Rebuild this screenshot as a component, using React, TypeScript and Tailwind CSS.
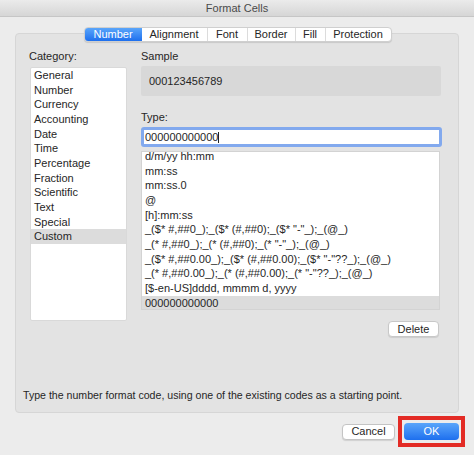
import React from "react";

const categories = [
  "General",
  "Number",
  "Currency",
  "Accounting",
  "Date",
  "Time",
  "Percentage",
  "Fraction",
  "Scientific",
  "Text",
  "Special",
  "Custom",
];

const formats = [
  "d/m/yy hh:mm",
  "mm:ss",
  "mm:ss.0",
  "@",
  "[h]:mm:ss",
  '_($* #,##0_);_($* (#,##0);_($* "-"_);_(@_)',
  '_(* #,##0_);_(* (#,##0);_(* "-"_);_(@_)',
  '_($* #,##0.00_);_($* (#,##0.00);_($* "-"??_);_(@_)',
  '_(* #,##0.00_);_(* (#,##0.00);_(* "-"??_);_(@_)',
  "[$-en-US]dddd, mmmm d, yyyy",
  "000000000000",
];

const tabs: { label: string; w: string; active?: boolean }[] = [
  { label: "Number", w: "w-[57px]", active: true },
  { label: "Alignment", w: "w-[65px]" },
  { label: "Font", w: "w-[40px]" },
  { label: "Border", w: "w-[48px]" },
  { label: "Fill", w: "w-[30px]" },
  { label: "Protection", w: "w-[66px]" },
];

export default function App() {
  return (
    <div
      className="w-[474px] h-[455px] bg-[#ececec] flex flex-col text-[#262626] text-[11px] overflow-hidden"
      style={{ fontFamily: '"Liberation Sans", Arial, sans-serif' }}
    >
      {/* Title bar */}
      <div className="h-[17px] shrink-0 flex items-center justify-center bg-gradient-to-b from-[#ebebeb] to-[#d6d6d6] border-b border-[#c6c6c6] text-[#4a4a4a] text-[11px]">
        Format Cells
      </div>

      {/* Tabs */}
      <div className="mt-[10px] flex justify-center relative z-10 pl-[1px]">
        <div className="flex h-[15px] rounded-[4px] bg-white border border-[#cfcfcf] shadow-[0_1px_1px_rgba(0,0,0,0.12)] overflow-hidden">
          {tabs.map((t, i) => (
            <div
              key={t.label}
              className={
                t.active
                  ? `${t.w} flex items-center justify-center bg-gradient-to-b from-[#5aa5fa] to-[#1d6fee] text-white`
                  : `${t.w} flex items-center justify-center ${i > 1 ? "border-l border-[#dcdcdc]" : ""}`
              }
            >
              {t.label}
            </div>
          ))}
        </div>
      </div>

      {/* Panel */}
      <div className="mx-[15px] -mt-[9px] h-[380px] shrink-0 bg-[#e3e3e3] border border-[#d6d6d6] rounded-[4px] flex flex-col">
        <div className="flex pt-[15px]">
          {/* Left column */}
          <div className="ml-[14px] w-[97px] flex flex-col">
            <div className="h-[14px] leading-[14px] -ml-[1px]">Category:</div>
            <div className="mt-[4px] h-[254px] bg-white border border-[#d9d9d9] rounded-[2px] overflow-hidden">
              {categories.map((c) => (
                <div
                  key={c}
                  className={`h-[14.67px] leading-[14.67px] pl-[3px] ${
                    c === "Custom" ? "bg-[#dcdcdc]" : ""
                  }`}
                >
                  {c}
                </div>
              ))}
            </div>
          </div>

          {/* Right column */}
          <div className="ml-[14px] w-[300px] flex flex-col">
            <div className="h-[14px] leading-[14px]">Sample</div>
            <div className="mt-[3px] h-[30px] bg-[#d8d8d8] rounded-[2px] flex items-center pl-[8px]">
              000123456789
            </div>
            <div className="mt-[14px] h-[14px] leading-[14px]">Type:</div>
            <div className="mt-[3px] h-[20px] w-[301px] border-[3px] border-[#82a9ee] rounded-[3px] bg-white flex items-center pl-[1px]">
              <span>000000000000</span>
              <span className="w-[1px] h-[11px] bg-[#222]" />
            </div>
            <div className="mt-[4px] h-[159px] w-[299px] bg-white border border-[#d3d3d3] overflow-hidden">
              <div className="-mt-[3px]">
                {formats.map((f, i) => (
                  <div
                    key={i}
                    className={`h-[14.67px] leading-[14.67px] pl-[3px] whitespace-nowrap ${
                      i === formats.length - 1 ? "bg-[#dcdcdc]" : ""
                    }`}
                  >
                    {f}
                  </div>
                ))}
              </div>
            </div>
            <div className="mt-[11px] flex justify-end pr-[2px]">
              <div className="w-[51px] h-[16px] bg-white border border-[#c8c8c8] rounded-[4px] shadow-[0_1px_1px_rgba(0,0,0,0.1)] flex items-center justify-center">
                Delete
              </div>
            </div>
          </div>
        </div>
        <div className="flex-1" />
        <div className="pl-[7px] pb-[10px] h-[24px] leading-[14px] text-[10.6px]">
          Type the number format code, using one of the existing codes as a starting point.
        </div>
      </div>

      {/* Buttons */}
      <div className="mt-[3px] flex justify-end items-center pr-[9px] gap-[3px]">
        <div className="w-[53px] h-[16px] bg-white border border-[#c4c4c4] rounded-[4px] shadow-[0_1px_1px_rgba(0,0,0,0.12)] flex items-center justify-center">
          Cancel
        </div>
        <div className="w-[67px] h-[31px] border-[4px] border-[#e32b25] flex items-center justify-center">
          <div className="w-[55px] h-[17px] rounded-[4px] bg-gradient-to-b from-[#5aa5fa] to-[#1d6fee] text-white flex items-center justify-center">
            OK
          </div>
        </div>
      </div>
    </div>
  );
}
